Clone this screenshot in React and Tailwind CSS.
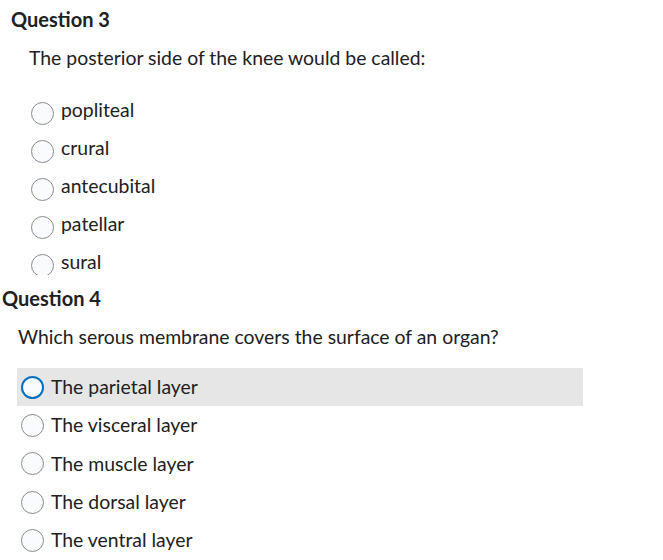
const q3 = ['popliteal', 'crural', 'antecubital', 'patellar', 'sural'];
const q4 = ['The parietal layer', 'The visceral layer', 'The muscle layer', 'The dorsal layer', 'The ventral layer'];

function Radio({ selected }) {
  return selected ? (
    <span className="block w-[23px] h-[23px] shrink-0 rounded-full border-[2.5px] border-[#006fbf] bg-[#f9fbff]" />
  ) : (
    <span className="block w-[23px] h-[23px] shrink-0 rounded-full border border-[#8b8b8b] bg-[#f9fbff]" />
  );
}

export default function App() {
  return (
    <div className="w-[663px] h-[560px] bg-white text-[#202122] overflow-hidden" style={{ fontFamily: 'Lato, "Open Sans", sans-serif' }}>
      {/* Question 3 */}
      <div className="h-[275px] overflow-hidden">
        <h2 className="mt-[7px] pl-[11px] text-[20px] leading-[24px] font-bold">Question 3</h2>
        <p className="mt-[15px] pl-[29px] text-[19.4px] leading-[24px]">The posterior side of the knee would be called:</p>
        <div className="mt-[24px] pl-[31px]">
          {q3.map((o) => (
            <div key={o} className="flex items-center gap-[7px] h-[38px]">
              <Radio />
              <span className="text-[19.4px] leading-[24px] mb-[7px]">{o}</span>
            </div>
          ))}
        </div>
      </div>

      {/* Question 4 */}
      <div>
        <h2 className="mt-[11px] pl-[2px] text-[20px] leading-[24px] font-bold">Question 4</h2>
        <p className="mt-[15px] pl-[18px] text-[19.4px] leading-[24px]">Which serous membrane covers the surface of an organ?</p>
        <div className="mt-[19px] ml-[17px] w-[566px]">
          {q4.map((o, i) => (
            <div key={o} className={`flex items-center gap-[7px] h-[38.3px] pl-[4px] ${i === 0 ? 'bg-[#e6e6e6]' : ''}`}>
              <Radio selected={i === 0} />
              <span className="text-[19.4px] leading-[24px]">{o}</span>
            </div>
          ))}
        </div>
      </div>
    </div>
  );
}
